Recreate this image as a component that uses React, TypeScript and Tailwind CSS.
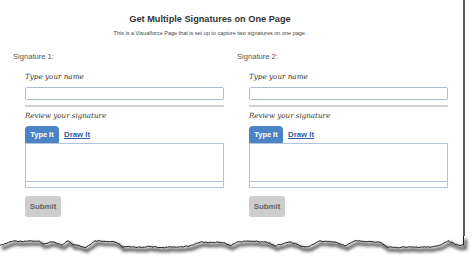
import React from 'react';

const SANS = { fontFamily: '"Liberation Sans", Arial, sans-serif' };
const SERIF = { fontFamily: '"DejaVu Serif", Georgia, serif' };

// key points of the torn paper edge, in page coordinates
const EDGE: [number, number][] = [
  [0, 245.5], [5, 244], [10, 241.8], [15, 241], [22, 241.3], [30, 240.8], [40, 241.5], [43, 244.5],
  [47, 243], [50, 242], [55, 242.3], [62, 245], [66, 242], [68, 240.5], [70, 242], [73, 245],
  [78, 245.5], [85, 247.5], [90, 245], [95, 241], [105, 241.5], [115, 242], [119, 244], [122, 247],
  [130, 246.8], [140, 247.2], [150, 246.5], [160, 247.5], [175, 247], [185, 246.5], [190, 246],
  [195, 244], [200, 242], [210, 242.5], [220, 242], [225, 243], [230, 246], [233, 244], [237, 242],
  [250, 241], [258, 241.5], [265, 242], [270, 243], [275, 246], [282, 244], [290, 242], [297, 244],
  [300, 246], [305, 247], [310, 246], [315, 243], [320, 241], [328, 241.5], [335, 242], [340, 244],
  [345, 246], [350, 243], [355, 240.7], [365, 241.5], [380, 242], [384, 245], [388, 247], [395, 247.5],
  [410, 247], [420, 247.3], [430, 247], [435, 246.5], [440, 245], [444, 243], [448, 241], [452, 242.5],
  [455, 244], [460, 245.5], [463.5, 245],
];

function noise(i: number) {
  const v = Math.sin(i * 12.9898) * 43758.5453;
  return v - Math.floor(v) - 0.5;
}

function edgePath() {
  const pts: string[] = [];
  let n = 0;
  for (let k = 0; k < EDGE.length - 1; k++) {
    const [x1, y1] = EDGE[k];
    const [x2, y2] = EDGE[k + 1];
    const steps = Math.max(1, Math.round((x2 - x1) / 1.5));
    for (let s = 0; s < steps; s++) {
      const t = s / steps;
      const x = x1 + (x2 - x1) * t;
      const y = y1 + (y2 - y1) * t + (k === 0 && s === 0 ? 0 : noise(n++) * 0.9);
      pts.push(`${x.toFixed(2)},${y.toFixed(2)}`);
    }
  }
  const last = EDGE[EDGE.length - 1];
  pts.push(`${last[0]},${last[1]}`);
  return 'M' + pts.join(' L') + ` L463.5,236`;
}

function TornEdge() {
  const d = edgePath();
  return (
    <svg width="474" height="32" viewBox="0 236 474 32" className="block">
      <defs>
        <filter id="blur" x="-5%" y="-50%" width="110%" height="250%">
          <feGaussianBlur stdDeviation="1.6" />
        </filter>
      </defs>
      <path d={d} transform="translate(2,3)" fill="none" stroke="#000" strokeOpacity="0.6" strokeWidth="3.5" filter="url(#blur)" />
      <path d={d} fill="none" stroke="#1e1e1e" strokeWidth="1" />
    </svg>
  );
}

function SignatureColumn({ label }: { label: string }) {
  return (
    <div>
      <div className="mt-[11px] h-[14px] text-[7.6px] leading-[14px] text-[#555]" style={SANS}>
        {label}
      </div>
      <div className="ml-[12px] w-[199px]">
        <div className="mt-[7px] h-[12px] text-[7.2px] italic leading-[12px] text-[#333]" style={SERIF}>
          Type your name
        </div>
        <div className="mt-[4px] h-[13px] rounded-[2px] border border-[#a9bcd6] bg-white" />
        <div className="mt-[5px] h-[2px] bg-[#d2d2d2]" />
        <div className="mt-[3px] h-[12px] text-[7.1px] italic leading-[12px] text-[#333]" style={SERIF}>
          Review your signature
        </div>
        <div className="mt-[4px] flex h-[17px] items-end" style={SANS}>
          <div className="flex h-[17px] w-[34px] items-center justify-center rounded-t-[4px] bg-[#4b84c4] text-[7.4px] font-bold text-white">
            Type It
          </div>
          <div className="ml-[5px] flex h-[17px] items-center text-[7.8px] font-bold text-[#2c5fa4] underline">
            Draw It
          </div>
        </div>
        <div className="flex h-[45px] flex-col border border-[#b3c3da]">
          <div className="h-[38px] border-b border-[#b3c3da]" />
        </div>
        <div
          className="mt-[8px] flex h-[21px] w-[36px] items-center justify-center rounded-[3px] bg-[#cdcdcd] text-[7.9px] font-bold text-[#666]"
          style={SANS}
        >
          Submit
        </div>
      </div>
    </div>
  );
}

export default function App() {
  return (
    <div className="h-[268px] w-[474px] overflow-hidden bg-white">
      <div className="h-[236px] w-[465px] border-r-2 border-[#5c5c5c]">
        <div className="w-[420px] pt-[13px] text-center" style={SANS}>
          <div className="h-[13px] text-[9.2px] font-bold leading-[13px] text-[#333]">
            Get Multiple Signatures on One Page
          </div>
          <div className="mt-[1px] h-[12px] text-[5.5px] leading-[12px] text-[#444]">
            This is a Visualforce Page that is set up to capture two signatures on one page.
          </div>
        </div>
        <div className="grid grid-cols-[224px_224px] pl-[13px]">
          <SignatureColumn label="Signature 1:" />
          <SignatureColumn label="Signature 2:" />
        </div>
      </div>
      <TornEdge />
    </div>
  );
}
